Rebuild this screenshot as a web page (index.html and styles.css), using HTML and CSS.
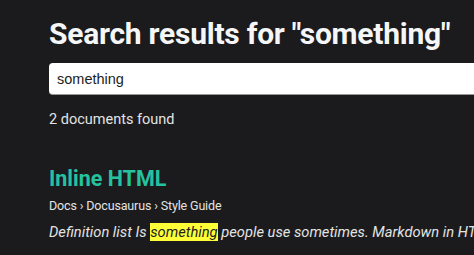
FILE: index.html
```html
<!DOCTYPE html>
<html>
<head>
<meta charset="utf-8">
<link rel="stylesheet" href="styles.css">
</head>
<body>
<main class="page">
  <h1 class="title">Search results for "something"</h1>
  <div class="search-box"><input class="search-input" type="search" value="something"></div>
  <p class="count">2 documents found</p>
  <article class="result">
    <h2 class="result-title">Inline HTML</h2>
    <nav class="crumbs">Docs › Docusaurus › Style Guide</nav>
    <p class="excerpt">Definition list Is <mark class="hit">something</mark> people use sometimes. Markdown in HTML is not supported here.</p>
  </article>
</main>
</body>
</html>
```
FILE: styles.css
```css
html, body {
  margin: 0;
  padding: 0;
  background: #1b1b1d;
  overflow: hidden;
}
body {
  font-family: Roboto, "Noto Sans", sans-serif;
  color: #e3e3e3;
  width: 474px;
  height: 255px;
}
.page {
  padding: 17px 0 0 49px;
}
.title {
  margin: 0;
  font-size: 30px;
  font-weight: 700;
  line-height: 34px;
  color: #f5f6f7;
  white-space: nowrap;
  letter-spacing: -0.25px;
}
.search-box {
  margin-top: 12px;
  width: 440px;
}
.search-input {
  box-sizing: border-box;
  width: 100%;
  height: 32px;
  border: none;
  border-bottom: 1px solid #9a9a9a;
  border-radius: 4px;
  background: #fff;
  padding: 0 8px;
  font-family: "Liberation Sans", Arial, sans-serif;
  font-size: 14.5px;
  color: #1c1e21;
  outline: none;
  -webkit-appearance: none;
  appearance: none;
}
.count {
  margin: 15px 0 0;
  font-size: 14.5px;
  line-height: 20px;
}
.result {
  margin-top: 36px;
}
.result-title {
  margin: 0;
  font-size: 21.5px;
  font-weight: 700;
  line-height: 26px;
  color: #25c2a0;
}
.crumbs {
  margin-top: 6px;
  font-size: 12.5px;
  line-height: 16px;
  color: #e3e3e3;
  letter-spacing: -0.15px;
}
.excerpt {
  margin: 9px 0 0;
  font-size: 14.7px;
  line-height: 19px;
  font-style: italic;
  white-space: nowrap;
}
.hit {
  background: #ffff38;
  color: #1c1e21;
  padding: 0;
}
```
